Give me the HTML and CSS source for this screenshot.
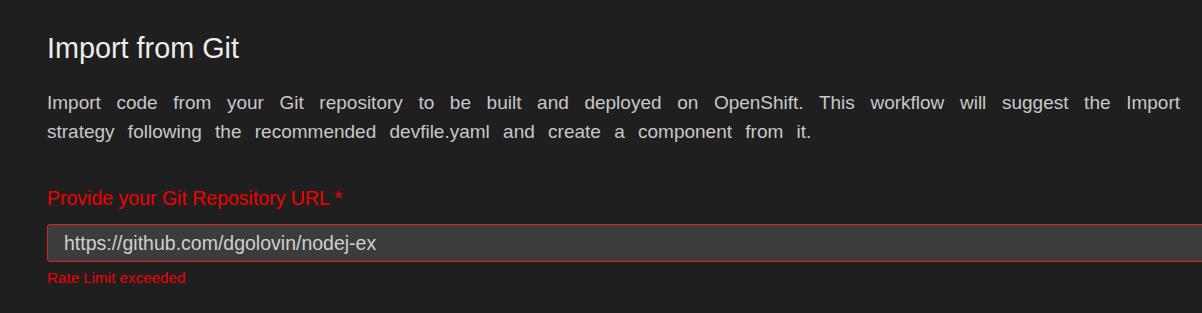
FILE: index.html
```html
<!DOCTYPE html>
<html>
<head>
<meta charset="utf-8">
<link rel="stylesheet" href="styles.css">
</head>
<body>
<main class="page">
  <h1 class="title">Import from Git</h1>
  <p class="intro">Import code from your Git repository to be built and deployed on OpenShift. This workflow will suggest the Import strategy following the recommended devfile.yaml and create a component from it.</p>
  <div class="field">
    <label class="label" for="repo">Provide your Git Repository URL *</label>
    <input class="input" id="repo" type="text" value="https://github.com/dgolovin/nodej-ex">
    <div class="error">Rate Limit exceeded</div>
  </div>
</main>
</body>
</html>
```

FILE: styles.css
```css
html, body {
  margin: 0;
  padding: 0;
  background: #1f1f1f;
  overflow: hidden;
}
body {
  width: 1202px;
  height: 313px;
  font-family: "Liberation Sans", Arial, sans-serif;
}
.page {
  padding: 32px 0 0 47px;
  width: 1300px;
}
.title {
  margin: 0;
  font-size: 28.8px;
  line-height: 32px;
  font-weight: 400;
  color: #ececec;
}
.intro {
  margin: 24px 0 0 0;
  width: 1133px;
  font-size: 19px;
  line-height: 29px;
  color: #c8c8c8;
  text-align: justify;
  word-spacing: 8px;
}
.field {
  margin-top: 40px;
  display: flex;
  flex-direction: column;
}
.label {
  font-size: 19.5px;
  line-height: 24px;
  color: #f20000;
}
.input {
  margin-top: 14px;
  box-sizing: border-box;
  width: 1250px;
  height: 38px;
  padding: 0 16px;
  border: 1px solid #d92424;
  border-radius: 3px;
  background: #3c3c3c;
  color: #cfcfcf;
  font-family: "Liberation Sans", Arial, sans-serif;
  font-size: 19.5px;
  outline: none;
}
.error {
  margin-top: 7px;
  font-size: 15.2px;
  line-height: 17px;
  color: #f00000;
}
```
